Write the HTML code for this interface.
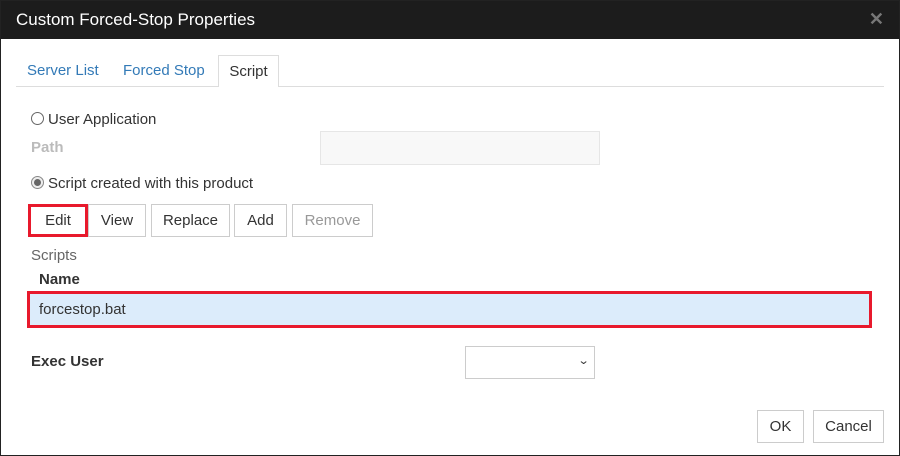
<!DOCTYPE html><html><head><style>
*{box-sizing:border-box;margin:0;padding:0}
body{width:900px;height:456px;background:#fff;font-family:"Liberation Sans",sans-serif;font-size:15px;color:#333;position:relative;overflow:hidden}
.frame{position:absolute;left:0;top:0;width:900px;height:456px;border:1px solid #222}
.title{position:absolute;left:0;top:0;width:900px;height:39px;background:#1c1c1c;color:#fff;font-size:17px;line-height:39px;padding-left:16px}
.x{position:absolute;right:16px;top:0;color:#777;font-size:18px;font-weight:bold}
.a{position:absolute;white-space:nowrap}
.btn{position:absolute;top:204px;height:33px;border:1px solid #ccc;background:#fff;text-align:center;line-height:31px;font-size:15px;color:#333}
</style></head><body>
<div class="title">Custom Forced-Stop Properties<span class="x">✕</span></div>
<div class="frame"></div>
<div class="a" style="left:16px;top:86px;width:868px;height:1px;background:#ddd"></div>
<div class="a" style="left:27px;top:62px;color:#337ab7">Server List</div>
<div class="a" style="left:123px;top:62px;color:#337ab7">Forced Stop</div>
<div class="a" style="left:218px;top:55px;width:61px;height:32px;border:1px solid #ddd;border-bottom:none;background:#fff;text-align:center;line-height:31px">Script</div>
<div class="a" style="left:31px;top:112px;width:13px;height:13px;border:1px solid #666;border-radius:50%"></div>
<div class="a" style="left:48px;top:111px">User Application</div>
<div class="a" style="left:31px;top:139px;color:#bbb;font-weight:bold">Path</div>
<div class="a" style="left:320px;top:131px;width:280px;height:34px;border:1px solid #e6e6e6;background:#f8f8f8"></div>
<div class="a" style="left:31px;top:176px;width:13px;height:13px;border:1px solid #888;border-radius:50%;background:#eee"><div style="margin:2px;width:7px;height:7px;border-radius:50%;background:#666"></div></div>
<div class="a" style="left:48px;top:175px">Script created with this product</div>
<div class="btn" style="left:28px;width:60px;border:3px solid #e8192c;line-height:27px">Edit</div>
<div class="btn" style="left:88px;width:58px">View</div>
<div class="btn" style="left:151px;width:79px">Replace</div>
<div class="btn" style="left:234px;width:53px">Add</div>
<div class="btn" style="left:292px;width:81px;color:#999">Remove</div>
<div class="a" style="left:31px;top:247px;color:#666">Scripts</div>
<div class="a" style="left:39px;top:271px;font-weight:bold">Name</div>
<div class="a" style="left:27px;top:291px;width:845px;height:37px;border:3px solid #e8192c;background:#dcecfb;padding-left:9px;line-height:31px">forcestop.bat</div>
<div class="a" style="left:31px;top:353px;font-weight:bold">Exec User</div>
<div class="a" style="left:465px;top:346px;width:130px;height:33px;border:1px solid #ccc"><span style="position:absolute;right:6px;top:7px;font-size:11px;transform:scaleX(1.3)">⌄</span></div>
<div class="btn" style="left:757px;top:410px;width:47px">OK</div>
<div class="btn" style="left:813px;top:410px;width:71px">Cancel</div>
</body></html>
